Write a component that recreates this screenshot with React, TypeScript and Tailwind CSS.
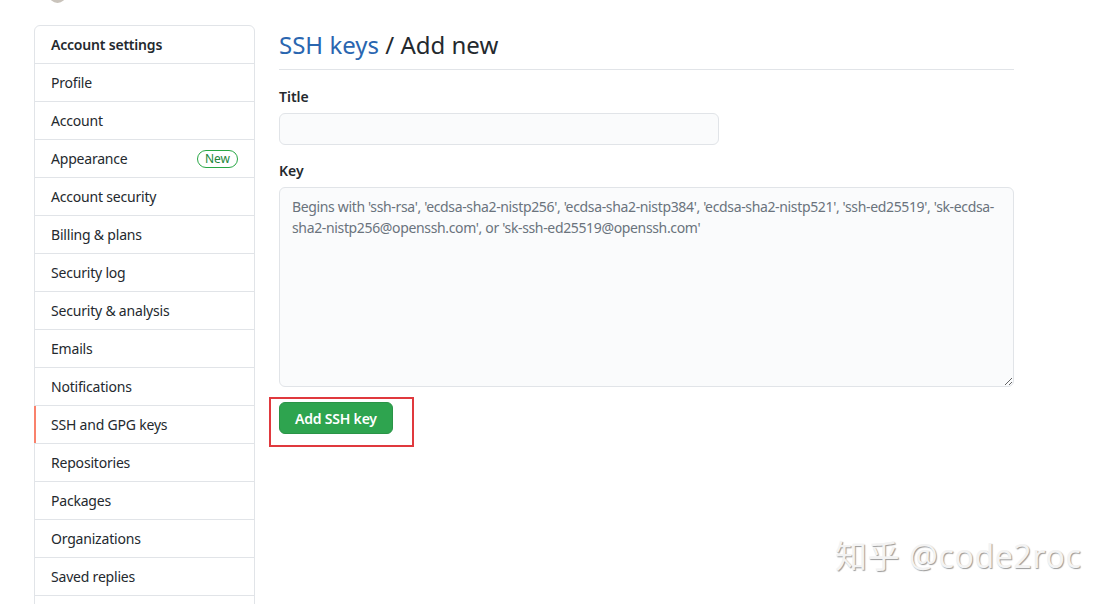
import { useState } from "react";

const menuItems = [
  "Profile",
  "Account",
  "Appearance",
  "Account security",
  "Billing & plans",
  "Security log",
  "Security & analysis",
  "Emails",
  "Notifications",
  "SSH and GPG keys",
  "Repositories",
  "Packages",
  "Organizations",
  "Saved replies",
  "",
];

const activeItem = "SSH and GPG keys";

const placeholderText =
  "Begins with 'ssh-rsa', 'ecdsa-sha2-nistp256', 'ecdsa-sha2-nistp384', 'ecdsa-sha2-nistp521', 'ssh-ed25519', 'sk-ecdsa-sha2-nistp256@openssh.com', or 'sk-ssh-ed25519@openssh.com'";

const App = () => {
  const [title, setTitle] = useState<string>("");
  const [key, setKey] = useState<string>("");

  return (
    <div className="relative w-[1113px] h-[604px] overflow-hidden bg-white text-[#24292e] font-['Noto_Sans','Liberation_Sans',sans-serif]">
      {/* avatar peeking at the top edge */}
      <div className="absolute left-[49px] top-[-14px] w-[17px] h-[17px] rounded-full bg-[#c9c3bb]" />

      <div className="flex gap-6 pl-[34px] pt-[25px]">
        {/* sidebar */}
        <nav className="w-[221px] shrink-0 border border-[#e1e4e8] rounded-md">
          <div className="h-[38px] flex items-center px-4 border-b border-[#e1e4e8] text-[14px] font-semibold tracking-[-0.2px]">
            Account settings
          </div>
          {menuItems.map((item, i) => (
            <div
              key={i}
              className="relative h-[38px] flex items-center justify-between px-4 border-b border-[#e1e4e8] text-[14px] tracking-[-0.2px]"
            >
              {item == activeItem && (
                <span className="absolute left-[-1px] top-0 bottom-0 w-[2px] bg-[#f9826c]" />
              )}
              <span>{item}</span>
              {item == "Appearance" && (
                <span className="h-[18px] px-[7px] flex items-center rounded-full border border-[#28a745] text-[#22863a] text-[12px] leading-none tracking-normal">
                  New
                </span>
              )}
            </div>
          ))}
        </nav>

        {/* main content */}
        <main className="w-[735px]">
          <h2 className="text-[24px] font-normal leading-[36px] pt-[2px] pb-[6px] border-b border-[#e1e4e8]">
            <a className="text-[#2a66b0]">SSH keys</a> / Add new
          </h2>

          <form className="mt-4 flex flex-col">
            <label className="text-[14px] font-semibold leading-[21px] mb-[6px]">Title</label>
            <input
              type="text"
              value={title}
              onChange={(e) => setTitle(e.target.value)}
              className="w-[440px] h-[32px] px-3 text-[14px] bg-[#fafbfc] border border-[#e1e4e8] rounded-md outline-none"
            />

            <label className="text-[14px] font-semibold leading-[21px] mt-[15px] mb-[6px]">Key</label>
            <textarea
              value={key}
              onChange={(e) => setKey(e.target.value)}
              placeholder={placeholderText}
              className="w-[735px] h-[200px] px-3 py-2 text-[14px] leading-[21px] tracking-[-0.35px] bg-[#fafbfc] border border-[#e1e4e8] rounded-md outline-none placeholder:text-[#6a737d] resize-y"
            />

            <div className="relative mt-[15px] w-fit">
              <button
                type="button"
                className="h-[32px] px-[15px] rounded-md bg-[#2ea44f] border border-[#2a9447] text-white text-[14px] font-semibold tracking-[-0.2px]"
              >
                Add SSH key
              </button>
              <div className="absolute left-[-10px] top-[-5px] w-[145px] h-[50px] border-2 border-[#e0393e] pointer-events-none" />
            </div>
          </form>
        </main>
      </div>

      {/* watermark */}
      <div className="absolute left-[835px] top-[533px] text-[32px] leading-[46px] tracking-[0.6px] text-[#f3f3f3] [text-shadow:1px_1px_1px_#9a9a9a] font-['Noto_Sans','Noto_Sans_CJK_SC',sans-serif]">
        知乎 @code2roc
      </div>
    </div>
  );
};

export default App;
